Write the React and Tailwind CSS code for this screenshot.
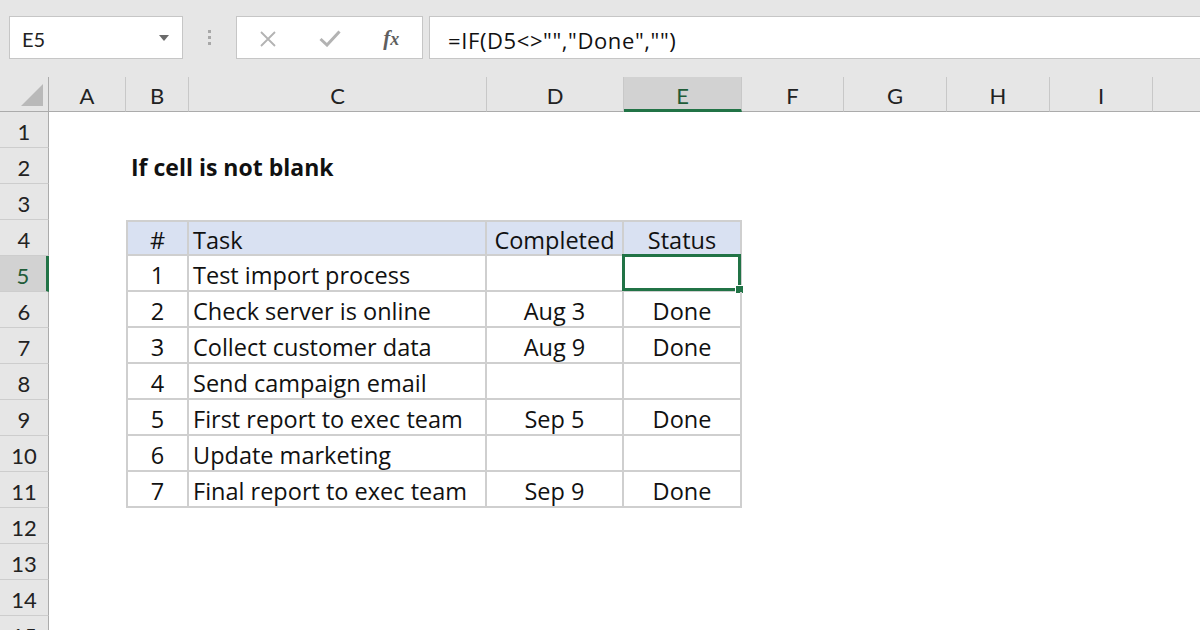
import React from "react";

const COLS = [
  { k: "A", w: "w-[77px]" },
  { k: "B", w: "w-[63px]" },
  { k: "C", w: "w-[298px]" },
  { k: "D", w: "w-[137px]" },
  { k: "E", w: "w-[118px]" },
  { k: "F", w: "w-[102px]" },
  { k: "G", w: "w-[103px]" },
  { k: "H", w: "w-[103px]" },
  { k: "I", w: "w-[103px]" },
  { k: "", w: "w-[103px]" },
];

const DATA = [
  [1, "Test import process", "", ""],
  [2, "Check server is online", "Aug 3", "Done"],
  [3, "Collect customer data", "Aug 9", "Done"],
  [4, "Send campaign email", "", ""],
  [5, "First report to exec team", "Sep 5", "Done"],
  [6, "Update marketing", "", ""],
  [7, "Final report to exec team", "Sep 9", "Done"],
];

function TopBar() {
  return (
    <div className="h-[77px] shrink-0 bg-[#e6e6e6] flex items-start pt-[16px] pl-[9px]">
      <div className="w-[174px] h-[43px] bg-white border border-[#c6c6c6] flex items-center pl-[12px] pr-[12px] relative">
        <span className="text-[20px] leading-none text-[#222] pt-[2px]">E5</span>
        <div className="ml-auto w-0 h-0 border-l-[5px] border-r-[5px] border-t-[6px] border-l-transparent border-r-transparent border-t-[#6a6a6a] mr-[1px]" />
      </div>
      <div className="w-[53px] h-[43px] flex flex-col items-center justify-center gap-[3px]">
        <div className="w-[3px] h-[3px] bg-[#a8a8a8]" />
        <div className="w-[3px] h-[3px] bg-[#a8a8a8]" />
        <div className="w-[3px] h-[3px] bg-[#a8a8a8]" />
      </div>
      <div className="w-[187px] h-[43px] bg-white border border-[#c6c6c6] flex items-center">
        <div className="w-[62px] flex justify-center pl-[1px] pt-[2px]">
          <svg width="18" height="16" viewBox="0 0 18 16">
            <path d="M2 1 L16 15 M16 1 L2 15" stroke="#b3b3b3" strokeWidth="1.8" fill="none" />
          </svg>
        </div>
        <div className="w-[62px] flex justify-center pt-[2px]">
          <svg width="22" height="17" viewBox="0 0 22 17">
            <path d="M1.5 9 L8 15 L20.5 1.5" stroke="#b3b3b3" strokeWidth="3" fill="none" />
          </svg>
        </div>
        <div className="w-[62px] flex justify-center pt-[2px]">
          <span className="font-['Liberation_Serif'] italic font-bold text-[#5e5e5e] leading-none">
            <span className="text-[21px]">f</span>
            <span className="text-[18px]">x</span>
          </span>
        </div>
      </div>
      <div className="ml-[6px] flex-1 h-[43px] bg-white border border-r-0 border-[#c6c6c6] flex items-center pl-[18px]">
        <span className="font-['Open_Sans'] text-[22px] tracking-[0.6px] leading-none text-[#111] pt-[5px]">
          =IF(D5&lt;&gt;"","Done","")
        </span>
      </div>
    </div>
  );
}

function ColHeader() {
  return (
    <div className="flex h-[35px] shrink-0 bg-[#e6e6e6]">
      <div className="w-[49px] shrink-0 h-full border-r border-[#ababab] border-b border-b-[#ababab] relative">
        <svg className="absolute left-[21px] top-[7px]" width="22" height="22" viewBox="0 0 22 22">
          <path d="M22 0 L22 22 L0 22 Z" fill="#b9b9b9" />
        </svg>
      </div>
      {COLS.map((c, i) => {
        const sel = c.k === "E";
        return (
          <div
            key={i}
            className={
              c.w +
              " shrink-0 h-full flex items-center justify-center border-r border-[#c8c8c8] " +
              (sel
                ? "bg-[#d2d2d2] border-b-[3px] border-b-[#217346] text-[#1f5c38]"
                : "border-b border-b-[#ababab] text-[#222]")
            }
          >
            <span className={"text-[22px] leading-none " + (sel ? "pt-[5px]" : "pt-[3px]")}>{c.k}</span>
          </div>
        );
      })}
    </div>
  );
}

function Cell({ w, children, cls = "", inner = "justify-center" }) {
  return (
    <div className={w + " shrink-0 h-full flex items-center " + inner + " " + cls}>
      {children}
    </div>
  );
}

function Txt({ children, bold }) {
  return (
    <span
      className={
        "font-['Open_Sans'] leading-none whitespace-nowrap text-[#111] " +
        (bold ? "text-[23px] font-bold pt-[3px]" : "text-[23.5px] pt-[5px]")
      }
    >
      {children}
    </span>
  );
}

function BodyRow({ n }) {
  const selRow = n === 5;
  const tableRow = n >= 4 && n <= 11;
  const isHead = n === 4;
  const d = n >= 5 && n <= 11 ? DATA[n - 5] : null;
  const bd = "border-r-2 border-b-2 border-[#cfcfcf]";
  const top = isHead ? " border-t-2" : "";
  const bg = isHead ? " bg-[#d9e1f2]" : "";

  return (
    <div className="flex h-[36px] shrink-0">
      <div
        className={
          "w-[49px] shrink-0 h-full flex items-center justify-center border-b border-b-[#cdcdcd] " +
          (selRow
            ? "bg-[#d2d2d2] border-r-[3px] border-r-[#217346] text-[#1f5c38]"
            : "bg-[#e6e6e6] border-r border-r-[#ababab] text-[#222]")
        }
      >
        <span className="text-[22px] leading-none pt-[4px]">{n}</span>
      </div>
      <Cell w="w-[77px]" />
      {n === 2 ? (
        <div className="w-[63px] shrink-0 h-full flex items-center pl-[5px] overflow-visible relative z-10">
          <Txt bold>If cell is not blank</Txt>
        </div>
      ) : tableRow ? (
        <Cell w="w-[63px]" cls={bd + " border-l-2" + top + bg}>
          <Txt>{isHead ? "#" : d[0]}</Txt>
        </Cell>
      ) : (
        <Cell w="w-[63px]" />
      )}
      {tableRow ? (
        <Cell w="w-[298px]" inner="justify-start pl-[4px]" cls={bd + top + bg}>
          <Txt>{isHead ? "Task" : d[1]}</Txt>
        </Cell>
      ) : (
        <Cell w="w-[298px]" />
      )}
      {tableRow ? (
        <Cell w="w-[137px]" cls={bd + top + bg}>
          <Txt>{isHead ? "Completed" : d[2]}</Txt>
        </Cell>
      ) : (
        <Cell w="w-[137px]" />
      )}
      {tableRow ? (
        <Cell w="w-[118px]" cls={bd + top + bg + " relative"}>
          <Txt>{isHead ? "Status" : d[3]}</Txt>
          {selRow && (
            <div className="absolute -left-[2px] -top-[2px] -right-[1px] -bottom-[1px] border-[3px] border-[#217346]">
              <div className="absolute -right-[6px] -bottom-[6px] w-[9px] h-[9px] bg-[#217346] border border-white" />
            </div>
          )}
        </Cell>
      ) : (
        <Cell w="w-[118px]" />
      )}
      <Cell w="w-[102px]" />
      <Cell w="w-[103px]" />
      <Cell w="w-[103px]" />
      <Cell w="w-[103px]" />
    </div>
  );
}

export default function App() {
  const rows = Array.from({ length: 15 }, (_, i) => i + 1);
  return (
    <div className="w-[1200px] h-[630px] overflow-hidden bg-white font-['Lato',sans-serif] flex flex-col">
      <TopBar />
      <ColHeader />
      <div className="flex flex-col shrink-0">
        {rows.map((n) => (
          <BodyRow key={n} n={n} />
        ))}
      </div>
    </div>
  );
}
